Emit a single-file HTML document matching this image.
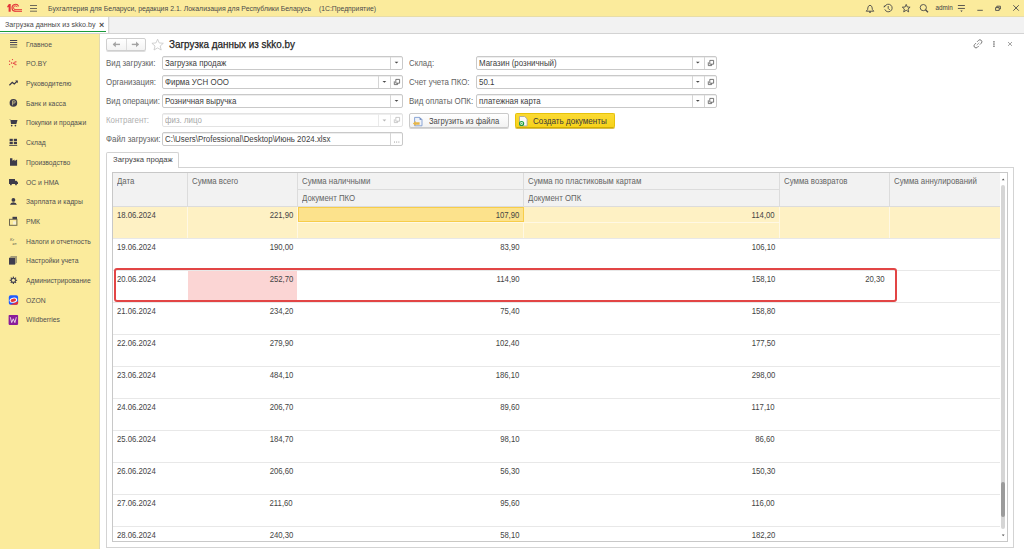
<!DOCTYPE html>
<html><head><meta charset="utf-8">
<style>
*{margin:0;padding:0;box-sizing:border-box}
html,body{width:1024px;height:549px;overflow:hidden;background:#fff;font-family:"Liberation Sans",sans-serif}
.a{position:absolute}
.t{position:absolute;white-space:nowrap;line-height:1}
#top{left:0;top:0;width:1024px;height:16px;background:#FBEB9C}
#tabs{left:0;top:16px;width:1024px;height:18px;background:#F2F2F2;border-top:1px solid #E8DDA8;border-bottom:1px solid #D3D3D3}
#tab1{left:0;top:17px;width:109px;height:16px;background:#fff;border-right:1px solid #D6D6D6;box-shadow:1px 0 0 #E9E9E9}
#side{left:0;top:34px;width:100px;height:515px;background:#FBEB9C;border-right:1px solid #E2DAB0}
.sb{font-size:7.8px;color:#505050;left:25.5px;transform:scaleX(.87);transform-origin:0 0;margin-top:-0.2px}
.lbl{font-size:8.5px;color:#626262;transform:scaleX(.93);transform-origin:0 0;margin-top:-0.5px}
.inp{position:absolute;height:14px;border:1px solid #C9C9C9;border-radius:2px;background:#fff;box-shadow:inset 0 1px 0 #eee}
.itx{font-size:8.5px;color:#404040;transform:scaleX(.93);transform-origin:0 0;margin-top:-0.5px}
.sep{position:absolute;top:0;width:1px;height:100%;background:#D5D5D5}
.th{font-size:8.3px;color:#646464;transform:scaleX(.945);transform-origin:0 0;margin-top:-0.5px}
.td{font-size:8.6px;color:#444;transform:scaleX(.9);transform-origin:100% 0}
.hl{position:absolute;height:1px;background:#E8E8E8}
</style></head><body>
<!-- top bar -->
<div id="top" class="a"></div>
<div id="tabs" class="a"></div>
<div id="tab1" class="a"></div>
<div class="a" style="left:0;top:31px;width:106px;height:1px;background:#1A9B3A"></div>
<div class="t" style="left:5px;top:21.8px;font-size:7.1px;color:#4a4a4a">Загрузка данных из skko.by</div>
<div class="t" style="left:99px;top:20.6px;font-size:9px;color:#505050;font-weight:bold">×</div>
<div class="t" style="left:48px;top:5.3px;font-size:7.45px;color:#4a4a4a;transform:scaleX(.932);transform-origin:0 0">Бухгалтерия для Беларуси, редакция 2.1. Локализация для Республики Беларусь</div>
<div class="t" style="left:318.6px;top:5.3px;font-size:7.3px;color:#4a4a4a;transform:scaleX(.932);transform-origin:0 0">(1С:Предприятие)</div>
<div class="t" style="left:935.6px;top:5.4px;font-size:6.3px;color:#3e3e3e">admin</div>

<!-- sidebar -->
<div id="side" class="a"></div>
<div class="t sb" style="top:40.8px">Главное</div>
<div class="t sb" style="top:60.5px">PO.BY</div>
<div class="t sb" style="top:80.2px">Руководителю</div>
<div class="t sb" style="top:99.9px">Банк и касса</div>
<div class="t sb" style="top:119.6px">Покупки и продажи</div>
<div class="t sb" style="top:139.3px">Склад</div>
<div class="t sb" style="top:159.0px">Производство</div>
<div class="t sb" style="top:178.7px">ОС и НМА</div>
<div class="t sb" style="top:198.4px">Зарплата и кадры</div>
<div class="t sb" style="top:218.1px">РМК</div>
<div class="t sb" style="top:237.8px">Налоги и отчетность</div>
<div class="t sb" style="top:257.5px">Настройки учета</div>
<div class="t sb" style="top:277.2px">Администрирование</div>
<div class="t sb" style="top:296.9px">OZON</div>
<div class="t sb" style="top:316.6px">Wildberries</div>

<!-- form header -->
<div class="a" style="left:106px;top:38px;width:40px;height:13px;border:1px solid #CFCFCF;border-radius:2px;background:linear-gradient(#fff,#F3F3F3);box-shadow:0 1px 0 #ddd"></div>
<div class="a" style="left:126px;top:39px;width:1px;height:11px;background:#DCDCDC"></div>
<div class="t" style="left:169.2px;top:39.6px;font-size:10.2px;color:#1e1e1e;-webkit-text-stroke:0.25px #1e1e1e;transform:scaleX(.97);transform-origin:0 0">Загрузка данных из skko.by</div>

<!-- form rows -->
<div class="t lbl" style="left:106px;top:59.5px">Вид загрузки:</div>
<div class="inp" style="left:162px;top:56px;width:241px"><div class="sep" style="left:227px"></div></div>
<div class="t itx" style="left:165px;top:59.5px">Загрузка продаж</div>

<div class="t lbl" style="left:106px;top:78.5px">Организация:</div>
<div class="inp" style="left:162px;top:75px;width:241px"><div class="sep" style="left:215px"></div><div class="sep" style="left:227px"></div></div>
<div class="t itx" style="left:165px;top:78.5px">Фирма УСН ООО</div>

<div class="t lbl" style="left:106px;top:97.5px">Вид операции:</div>
<div class="inp" style="left:162px;top:94px;width:241px"><div class="sep" style="left:227px"></div></div>
<div class="t itx" style="left:165px;top:97.5px">Розничная выручка</div>

<div class="t lbl" style="left:106px;top:116.5px;color:#B0B0B0">Контрагент:</div>
<div class="inp" style="left:162px;top:113px;width:241px;border-color:#E3E3E3"><div class="sep" style="left:215px;background:#EAEAEA"></div><div class="sep" style="left:227px;background:#EAEAEA"></div></div>
<div class="t itx" style="left:165px;top:116.5px;color:#A8A8A8">физ. лицо</div>

<div class="t lbl" style="left:106px;top:135.5px">Файл загрузки:</div>
<div class="inp" style="left:162px;top:132px;width:241px"><div class="sep" style="left:227px"></div></div>
<div class="t itx" style="left:165px;top:135.5px">C:\Users\Professional\Desktop\Июнь 2024.xlsx</div>

<div class="t lbl" style="left:409px;top:59.5px">Склад:</div>
<div class="inp" style="left:476px;top:56px;width:241px"><div class="sep" style="left:215px"></div><div class="sep" style="left:227px"></div></div>
<div class="t itx" style="left:479px;top:59.5px">Магазин (розничный)</div>

<div class="t lbl" style="left:409px;top:78.5px">Счет учета ПКО:</div>
<div class="inp" style="left:476px;top:75px;width:241px"><div class="sep" style="left:215px"></div><div class="sep" style="left:227px"></div></div>
<div class="t itx" style="left:479px;top:78.5px">50.1</div>

<div class="t lbl" style="left:409px;top:97.5px">Вид оплаты ОПК:</div>
<div class="inp" style="left:476px;top:94px;width:241px"><div class="sep" style="left:215px"></div><div class="sep" style="left:227px"></div></div>
<div class="t itx" style="left:479px;top:97.5px">платежная карта</div>

<div class="a" style="left:409px;top:113px;width:100px;height:15px;border:1px solid #CACACA;border-radius:2px;background:linear-gradient(#fff,#F2F2F2);box-shadow:0 1px 0 #D5D5D5"></div>
<div class="t itx" style="left:428.6px;top:117.4px;color:#4a4a4a;transform:scaleX(.895)">Загрузить из файла</div>
<div class="a" style="left:515px;top:113px;width:100px;height:15px;border:1px solid #E6C20A;border-bottom-color:#D2AE00;border-radius:2px;background:linear-gradient(#FBDA33,#F7D21A);box-shadow:0 1px 0 #D8BC50"></div>
<div class="t itx" style="left:532.8px;top:117.4px;color:#3a3a3a;transform:scaleX(.95)">Создать документы</div>

<!-- tab panel -->
<div class="a" style="left:106px;top:167px;width:908px;height:381px;border:1px solid #D3D3D3;border-top:1px solid #D3D3D3"></div>
<div class="a" style="left:106px;top:152px;width:73px;height:16px;border:1px solid #D3D3D3;border-bottom:none;border-radius:2px 2px 0 0;background:#fff"></div>
<div class="t" style="left:113px;top:155.5px;font-size:7.7px;color:#444">Загрузка продаж</div>

<!-- table -->
<div class="a" style="left:112px;top:172px;width:896px;height:370px;border:1px solid #C8C8C8;background:#fff"></div>
<!-- rows -->
<div class="a" style="left:113px;top:173px;width:887px;height:33px;background:#F2F2F2"></div>
<div class="hl" style="left:113px;top:206px;width:887px;background:#DCDCDC"></div>
<div class="hl" style="left:298px;top:189px;width:481px;background:#DCDCDC"></div>
<div class="a" style="left:187px;top:173px;width:1px;height:33px;background:#DCDCDC"></div>
<div class="a" style="left:297px;top:173px;width:1px;height:33px;background:#DCDCDC"></div>
<div class="a" style="left:523px;top:173px;width:1px;height:33px;background:#DCDCDC"></div>
<div class="a" style="left:779px;top:173px;width:1px;height:33px;background:#DCDCDC"></div>
<div class="a" style="left:889px;top:173px;width:1px;height:33px;background:#DCDCDC"></div>
<div class="t th" style="left:117px;top:177px">Дата</div>
<div class="t th" style="left:192px;top:177px">Сумма всего</div>
<div class="t th" style="left:302px;top:177px">Сумма наличными</div>
<div class="t th" style="left:528px;top:177px">Сумма по пластиковым картам</div>
<div class="t th" style="left:784px;top:177px">Сумма возвратов</div>
<div class="t th" style="left:894px;top:177px">Сумма аннулирований</div>
<div class="t th" style="left:302px;top:194px">Документ ПКО</div>
<div class="t th" style="left:528px;top:194px">Документ ОПК</div>
<div class="a" style="left:113px;top:207px;width:887px;height:31px;background:#FEF1C4"></div>
<div class="a" style="left:187px;top:207px;width:1px;height:31px;background:#FFF8E4"></div>
<div class="a" style="left:297px;top:207px;width:1px;height:31px;background:#FFF8E4"></div>
<div class="a" style="left:523px;top:207px;width:1px;height:31px;background:#FFF8E4"></div>
<div class="a" style="left:779px;top:207px;width:1px;height:31px;background:#FFF8E4"></div>
<div class="a" style="left:889px;top:207px;width:1px;height:31px;background:#FFF8E4"></div>
<div class="hl" style="left:298px;top:222px;width:481px;background:#FFF8E4"></div>
<div class="a" style="left:298px;top:207px;width:226px;height:15px;background:#FCE28C;border:1px solid #F7CD4A"></div>
<div class="hl" style="left:113px;top:238px;width:887px"></div>
<div class="t td" style="left:117px;top:210.5px;transform-origin:0 0">18.06.2024</div>
<div class="t td" style="right:731px;top:210.5px">221,90</div>
<div class="t td" style="right:504.5px;top:210.5px">107,90</div>
<div class="t td" style="right:249px;top:210.5px">114,00</div>
<div class="hl" style="left:113px;top:270px;width:887px"></div>
<div class="t td" style="left:117px;top:242.5px;transform-origin:0 0">19.06.2024</div>
<div class="t td" style="right:731px;top:242.5px">190,00</div>
<div class="t td" style="right:504.5px;top:242.5px">83,90</div>
<div class="t td" style="right:249px;top:242.5px">106,10</div>
<div class="a" style="left:188px;top:271px;width:109px;height:31px;background:#FBD5D4"></div>
<div class="hl" style="left:113px;top:302px;width:887px"></div>
<div class="t td" style="left:117px;top:274.5px;transform-origin:0 0">20.06.2024</div>
<div class="t td" style="right:731px;top:274.5px">252,70</div>
<div class="t td" style="right:504.5px;top:274.5px">114,90</div>
<div class="t td" style="right:249px;top:274.5px">158,10</div>
<div class="t td" style="right:139px;top:274.5px">20,30</div>
<div class="hl" style="left:113px;top:334px;width:887px"></div>
<div class="t td" style="left:117px;top:306.5px;transform-origin:0 0">21.06.2024</div>
<div class="t td" style="right:731px;top:306.5px">234,20</div>
<div class="t td" style="right:504.5px;top:306.5px">75,40</div>
<div class="t td" style="right:249px;top:306.5px">158,80</div>
<div class="hl" style="left:113px;top:366px;width:887px"></div>
<div class="t td" style="left:117px;top:338.5px;transform-origin:0 0">22.06.2024</div>
<div class="t td" style="right:731px;top:338.5px">279,90</div>
<div class="t td" style="right:504.5px;top:338.5px">102,40</div>
<div class="t td" style="right:249px;top:338.5px">177,50</div>
<div class="hl" style="left:113px;top:398px;width:887px"></div>
<div class="t td" style="left:117px;top:370.5px;transform-origin:0 0">23.06.2024</div>
<div class="t td" style="right:731px;top:370.5px">484,10</div>
<div class="t td" style="right:504.5px;top:370.5px">186,10</div>
<div class="t td" style="right:249px;top:370.5px">298,00</div>
<div class="hl" style="left:113px;top:430px;width:887px"></div>
<div class="t td" style="left:117px;top:402.5px;transform-origin:0 0">24.06.2024</div>
<div class="t td" style="right:731px;top:402.5px">206,70</div>
<div class="t td" style="right:504.5px;top:402.5px">89,60</div>
<div class="t td" style="right:249px;top:402.5px">117,10</div>
<div class="hl" style="left:113px;top:462px;width:887px"></div>
<div class="t td" style="left:117px;top:434.5px;transform-origin:0 0">25.06.2024</div>
<div class="t td" style="right:731px;top:434.5px">184,70</div>
<div class="t td" style="right:504.5px;top:434.5px">98,10</div>
<div class="t td" style="right:249px;top:434.5px">86,60</div>
<div class="hl" style="left:113px;top:494px;width:887px"></div>
<div class="t td" style="left:117px;top:466.5px;transform-origin:0 0">26.06.2024</div>
<div class="t td" style="right:731px;top:466.5px">206,60</div>
<div class="t td" style="right:504.5px;top:466.5px">56,30</div>
<div class="t td" style="right:249px;top:466.5px">150,30</div>
<div class="hl" style="left:113px;top:526px;width:887px"></div>
<div class="t td" style="left:117px;top:498.5px;transform-origin:0 0">27.06.2024</div>
<div class="t td" style="right:731px;top:498.5px">211,60</div>
<div class="t td" style="right:504.5px;top:498.5px">95,60</div>
<div class="t td" style="right:249px;top:498.5px">116,00</div>
<div class="t td" style="left:117px;top:530.5px;transform-origin:0 0">28.06.2024</div>
<div class="t td" style="right:731px;top:530.5px">240,30</div>
<div class="t td" style="right:504.5px;top:530.5px">58,10</div>
<div class="t td" style="right:249px;top:530.5px">182,20</div>
<div class="a" style="left:114px;top:268px;width:783px;height:34px;border:2px solid #E24545;border-radius:3px"></div>
<div class="a" style="left:1001px;top:185px;width:4px;height:344px;background:#D6D6D6;border-radius:2px"></div>
<div class="a" style="left:1001px;top:482px;width:4px;height:35px;background:#9B9B9B;border-radius:2px"></div>
<!-- /rows -->
<!-- icons -->
<svg class="a" style="left:0;top:0" width="1024" height="549" viewBox="0 0 1024 549">
<!-- 1C logo -->
<g fill="#E4353A">
<path d="M7.1 6.4 L8.9 4.1 H10.7 V11.8 H8.6 V6.9 L7.6 7.6 Z"/>
<rect x="14.6" y="9.2" width="7.4" height="1.0"/>
<rect x="14.6" y="10.8" width="7.4" height="1.0"/>
</g>
<path d="M18.7 6.4 A3.5 3.5 0 1 0 15.2 11.3" fill="none" stroke="#E4353A" stroke-width="1.1"/>
<path d="M17.2 7.1 A1.9 1.9 0 1 0 15.2 9.6" fill="none" stroke="#E4353A" stroke-width="0.9"/>
<!-- hamburger -->
<g stroke="#6E6A5A" stroke-width="1">
<line x1="30" y1="5.5" x2="37" y2="5.5"/><line x1="30" y1="8.5" x2="37" y2="8.5"/><line x1="30" y1="11.2" x2="37" y2="11.2"/>
</g>
<!-- top right icons -->
<g fill="none" stroke="#4A4A4A" stroke-width="0.9">
<path d="M866.2 11.2 H873.8 L872.4 9.6 L871.9 6.6 Q870 3.6 868.1 6.6 L867.6 9.6 Z"/>
<path d="M869.1 12.1 H870.9" stroke-width="1.1"/>
<path d="M885 6.2 A3.8 3.8 0 1 1 884.8 9.4"/>
<path d="M888.2 6 V8.4 L889.8 10"/>
<path d="M906.2 4.4 L907.3 7 L910.1 7.2 L908 9 L908.7 11.9 L906.2 10.3 L903.7 11.9 L904.4 9 L902.3 7.2 L905.1 7 Z"/>
<circle cx="923.3" cy="7.6" r="3.1"/>
<path d="M925.5 9.8 L928 12.2" stroke-width="1.3"/>
<path d="M957.9 5.5 H964.9 M957.9 8.45 H964.9" stroke-width="0.9"/>
<path d="M977.3 10.3 H982.8"/>
<path d="M995.6 7.6 H999.2 V10.4 H995.6 Z M996.8 7.6 V6.2 H1000.4 V9 H999.2"/>
<path d="M1013.3 5.2 L1018.8 10.7 M1018.8 5.2 L1013.3 10.7"/>
</g>
<path d="M884 5.2 L885.6 6.8 L883.6 7.4 Z" fill="#4A4A4A"/>
<path d="M960.4 10.5 H962.6 L961.5 11.9 Z" fill="#3A3A4A"/>
<!-- sidebar icons -->
<rect x="10" y="40" width="7.2" height="1" fill="#3F3D4E"/><rect x="10" y="42" width="7.2" height="1" fill="#47455A"/><rect x="10" y="44" width="7.2" height="0.9" fill="#5E5B5E"/><rect x="10" y="45.6" width="7.2" height="0.8" fill="#77735F"/><rect x="10" y="47.1" width="7.2" height="0.8" fill="#8E8866"/>
<g fill="#E0323A">
<circle cx="9.6" cy="61.2" r="0.65"/><circle cx="12.5" cy="59.6" r="0.6"/><circle cx="9.6" cy="64.3" r="0.65"/><circle cx="12.6" cy="66.8" r="0.6"/><circle cx="11.6" cy="63" r="0.8"/><circle cx="13.6" cy="63.2" r="0.7"/>
<path d="M16.6 61.8 H14.8 V64.7 H16.6" fill="none" stroke="#E0323A" stroke-width="0.8"/>
</g>
<path d="M9.4 85.2 L12.3 82.4 L14.3 83.9 L17 81.3" fill="none" stroke="#3A3848" stroke-width="1.2"/>
<path d="M15.2 80.6 H17.8 V83.2 Z" fill="#3A3848"/>
<circle cx="13.4" cy="102.9" r="3.8" fill="#3D3B4A"/>
<path d="M12.6 105.3 V100.8 H14.2 A1.1 1.1 0 0 1 14.2 103 H12.6" fill="none" stroke="#C9BE8A" stroke-width="0.9"/>
<!-- cart -->
<path d="M9.1 119.2 H10.3 L11 124.1 H16.4 L17.5 120.1 H10.4 Z" fill="#3D3B4A"/>
<circle cx="11.7" cy="125.6" r="0.85" fill="#3D3B4A"/><circle cx="15.4" cy="125.6" r="0.85" fill="#3D3B4A"/>
<!-- sklad -->
<g fill="#3D3B4A">
<rect x="9.6" y="138.8" width="3.2" height="2.4"/><rect x="13.8" y="138.8" width="3.2" height="2.4"/><rect x="9.6" y="141.9" width="3.2" height="2.3"/><rect x="13.8" y="141.9" width="3.2" height="2.3"/><rect x="9.2" y="145" width="8" height="0.8"/>
</g>
<!-- factory -->
<path d="M10 165.8 V158.2 H12.4 V160.8 L14.6 159.6 V161 L17.1 159.6 V165.8 Z" fill="#3D3B4A"/>
<!-- truck -->
<path d="M9 179 H15 V180.8 H16.6 L18 182.6 V184 H9 Z" fill="#3D3B4A"/>
<circle cx="10.9" cy="184.4" r="0.9" fill="#3D3B4A"/><circle cx="16" cy="184.4" r="0.9" fill="#3D3B4A"/>
<!-- person -->
<circle cx="13.4" cy="199.9" r="1.9" fill="#3D3B4A"/>
<path d="M10 204.7 Q10.5 202.2 13.4 202.2 Q16.3 202.2 16.9 204.7 Z" fill="#3D3B4A"/>
<!-- RMK -->
<rect x="12.5" y="216.8" width="4.5" height="2.2" fill="#3D3B4A"/>
<rect x="9.5" y="219.3" width="7.4" height="6" fill="none" stroke="#6C6650" stroke-width="1"/>
<rect x="13" y="221.3" width="3" height="3" fill="#F5F0D8"/>
<!-- nalogi -->
<text x="10" y="240.6" font-family="Liberation Sans" font-size="4" font-style="italic" fill="#58564F">Kr</text>
<text x="12.5" y="244.8" font-family="Liberation Sans" font-size="3.8" font-style="italic" fill="#58564F">кл</text>
<!-- cube -->
<path d="M9 258 L11 256 H17 V262.5 L15 264.5 H9 Z" fill="#A49C78"/>
<rect x="9" y="258" width="6" height="6.5" fill="#3F3D4E"/>
<!-- gear -->
<g transform="translate(13.4 280.3)">
<g fill="#45434F">
<rect x="-0.6" y="-3.7" width="1.2" height="7.4"/>
<rect x="-0.6" y="-3.7" width="1.2" height="7.4" transform="rotate(45)"/>
<rect x="-0.6" y="-3.7" width="1.2" height="7.4" transform="rotate(90)"/>
<rect x="-0.6" y="-3.7" width="1.2" height="7.4" transform="rotate(135)"/>
<circle r="2.6"/>
</g>
<circle r="1.5" fill="#F5E8A8"/>
</g>
<!-- ozon -->
<rect x="8.8" y="295.2" width="9.3" height="9.6" rx="1.8" fill="#1E5BFF"/>
<path d="M10.2 304.8 L18.1 301.2 V303 A1.8 1.8 0 0 1 16.3 304.8 Z" fill="#E8303A"/>
<ellipse cx="13.4" cy="300.2" rx="3.9" ry="2.5" fill="#fff" transform="rotate(-12 13.4 300.2)"/>
<ellipse cx="13.3" cy="300.3" rx="2.8" ry="1.6" fill="#E4353A" transform="rotate(-12 13.3 300.3)"/>
<!-- wildberries -->
<rect x="8.6" y="314.9" width="9.5" height="10" rx="0.8" fill="#8A1D9A"/>
<path d="M10.3 317.2 L11.7 322.6 L13.3 318.8 L14.9 322.6 L16.3 317.2" fill="none" stroke="#F4E8F6" stroke-width="0.85"/>
<!-- nav arrows & star -->
<g fill="none" stroke="#A3A3A3" stroke-width="1.4">
<path d="M113.5 44.4 H120"/><path d="M131.8 44.4 H138.3"/>
</g>
<path d="M112.7 44.4 L115.8 41.6 V47.2 Z" fill="#A3A3A3"/>
<path d="M139.1 44.4 L136 41.6 V47.2 Z" fill="#A3A3A3"/>
<path d="M157.6 39.2 L159.2 42.9 L163.3 43.3 L160.2 46 L161.2 50 L157.6 47.9 L154 50 L155 46 L151.9 43.3 L156 42.9 Z" fill="none" stroke="#C6C6C6" stroke-width="0.8"/>
<!-- form top right -->
<g fill="none" stroke="#6A6A6A" stroke-width="0.9">
<path d="M977.1 41.8 L978.5 40.4 A1.95 1.95 0 0 1 981.3 43.2 L979.9 44.6"/>
<path d="M976.0 43.1 L974.6 44.5 A1.95 1.95 0 0 0 977.4 47.3 L978.8 45.9"/>
<path d="M976.7 45.2 L979.3 42.6" stroke="#9A9A9A"/>
<path d="M1008 42 L1012 45.9 M1012 42 L1008 45.9" stroke="#8A8A8A" stroke-width="0.8"/>
</g>
<g fill="#555"><rect x="993.3" y="41.2" width="1.3" height="1.3"/><rect x="993.3" y="43.4" width="1.3" height="1.3"/><rect x="993.3" y="45.6" width="1.3" height="1.3"/></g>
<!-- dropdown arrows -->
<g fill="#4A4A4A">
<path d="M394.6 61.7 H398.4 L396.5 63.6 Z"/>
<path d="M382.5 80.9 H386.3 L384.4 82.8 Z"/>
<path d="M394.6 99.9 H398.4 L396.5 101.8 Z"/>
<path d="M695.9 61.7 H699.7 L697.8 63.6 Z"/>
<path d="M695.9 80.9 H699.7 L697.8 82.8 Z"/>
<path d="M695.9 99.9 H699.7 L697.8 101.8 Z"/>
</g>
<path d="M382.5 119.5 H386.3 L384.4 121.4 Z" fill="#B8B8B8"/>
<!-- open icons -->
<g fill="none" stroke="#555" stroke-width="0.8">
<path d="M394.3 81.3 V84.6 H397.6 V83.2 M395.8 79.4 H399.6 V83.2 H395.8 Z"/>
<path d="M708.3 62.3 V65.6 H711.6 V64.2 M709.8 60.4 H713.6 V64.2 H709.8 Z"/>
<path d="M708.3 81.3 V84.6 H711.6 V83.2 M709.8 79.4 H713.6 V83.2 H709.8 Z"/>
<path d="M708.3 100.3 V103.6 H711.6 V102.2 M709.8 98.4 H713.6 V102.2 H709.8 Z"/>
</g>
<path d="M394.3 119.3 V122.6 H397.6 V121.2 M395.8 117.4 H399.6 V121.2 H395.8 Z" fill="none" stroke="#BDBDBD" stroke-width="0.8"/>
<g fill="#8A8A8A"><rect x="394" y="141.6" width="0.9" height="0.9"/><rect x="396.2" y="141.6" width="0.9" height="0.9"/><rect x="398.4" y="141.6" width="0.9" height="0.9"/></g>
<!-- button icons -->
<path d="M414.6 117.4 H419.8 L422 119.6 V125.8 H414.6 Z" fill="#F0F3F8" stroke="#7F9DD2" stroke-width="0.9"/>
<path d="M419.6 117.4 V119.8 H422 Z" fill="#5B79B5"/>
<path d="M412.9 123.5 L415.7 121.1 V122.2 H419.6 V124.7 H415.7 V125.9 Z" fill="#E6B64A"/>
<path d="M519.5 116.5 H524.7 L527.1 118.9 V125.9 H519.5 Z" fill="#FAFAFA" stroke="#A0A0A0" stroke-width="0.8"/>
<circle cx="521.6" cy="123.5" r="2.0" fill="#F4FFF4" stroke="#1E9A3A" stroke-width="1.2"/>
<path d="M520.8 123.5 H522.4 M521.6 122.7 V124.3" stroke="#1E9A3A" stroke-width="0.5"/>
<!-- scrollbar arrows -->
<path d="M1001.8 180.3 H1004.6 L1003.2 178.6 Z" fill="#555"/>
<path d="M1001.8 534.6 H1004.6 L1003.2 536.3 Z" fill="#555"/>
</svg>

<!-- /icons -->
</body></html>
